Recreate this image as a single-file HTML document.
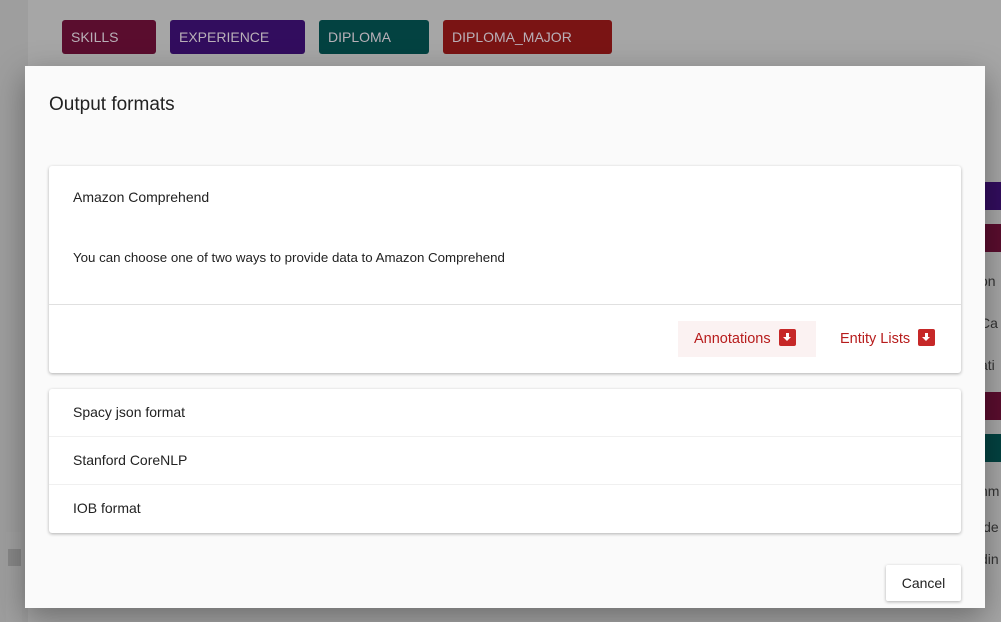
<!DOCTYPE html>
<html><head><style>
body{margin:0;width:1001px;height:622px;overflow:hidden;background:#a6a6a6;font-family:"Liberation Sans",sans-serif;position:relative}
.tag{position:absolute;top:20px;height:34px;border-radius:3px;color:#b9b0b8;font-size:14px;line-height:34px;padding-left:9px;box-sizing:border-box}
.side{position:absolute;left:975px;width:26px;height:28px}
.modal{position:absolute;left:25px;top:66px;width:960px;height:542px;background:#fafafa;box-shadow:0 10px 30px rgba(0,0,0,.35)}
h2{position:absolute;left:24px;top:28px;margin:0;font-size:19px;font-weight:normal;color:#222}
.card{position:absolute;left:24px;width:912px;background:#fff;border-radius:3px;box-shadow:0 1px 3px rgba(0,0,0,.3)}
.t{position:absolute;left:24px;font-size:14px;color:#222}
.btn{position:absolute;top:155px;height:36px;line-height:36px;color:#b71c1c;font-size:14.5px;padding:0 16px;box-sizing:border-box}
.ic{display:inline-block;width:17px;height:17px;background:#c62828;border-radius:2px;vertical-align:-3px;margin-left:8px;position:relative}
.ic:after{content:"";position:absolute;left:4px;top:8px;border:4.5px solid transparent;border-top:4px solid #fff}
.ic:before{content:"";position:absolute;left:7px;top:4px;width:3px;height:4px;background:#fff}
.row{position:absolute;left:0;width:912px;height:47px;border-bottom:1px solid #f0f0f0}
.sx{position:absolute;left:980px;font-size:14px;color:#333}
</style></head><body>
<div style="position:absolute;left:0;top:0;width:28px;height:622px;background:#9e9e9e"></div>
<div style="position:absolute;left:6px;top:532px;width:16px;height:90px;background:#a0a0a0"></div>
<div style="position:absolute;left:8px;top:549px;width:13px;height:17px;background:#888"></div>
<div class="tag" style="left:62px;width:94px;background:#5a0d2e">SKILLS</div>
<div class="tag" style="left:170px;width:135px;background:#320d5e">EXPERIENCE</div>
<div class="tag" style="left:319px;width:110px;background:#034241">DIPLOMA</div>
<div class="tag" style="left:443px;width:169px;background:#7a1414">DIPLOMA_MAJOR</div>
<div class="side" style="top:182px;background:#320d5e"></div>
<div class="side" style="top:224px;background:#5a0d2e"></div>
<div class="side" style="top:392px;background:#5a0d2e"></div>
<div class="side" style="top:434px;background:#034241"></div>
<div class="sx" style="top:273px">on</div>
<div class="sx" style="top:315px">Ca</div>
<div class="sx" style="top:357px">ati</div>
<div class="sx" style="top:483px">nm</div>
<div class="sx" style="top:519px">ide</div>
<div class="sx" style="top:551px">din</div>
<div class="modal">
<h2>Output formats</h2>
<div class="card" style="top:100px;height:207px">
<div class="t" style="top:23px">Amazon Comprehend</div>
<div class="t" style="top:84px;font-size:13.3px">You can choose one of two ways to provide data to Amazon Comprehend</div>
<div style="position:absolute;top:138px;left:0;width:912px;height:1px;background:#e0e0e0"></div>
<div class="btn" style="left:629px;width:138px;background:#fbf2f2">Annotations<span class="ic"></span></div>
<div class="btn" style="left:775px">Entity Lists<span class="ic"></span></div>
</div>
<div class="card" style="top:323px;height:144px">
<div class="row" style="top:0"><div class="t" style="top:15px">Spacy json format</div></div>
<div class="row" style="top:48px"><div class="t" style="top:15px">Stanford CoreNLP</div></div>
<div class="row" style="top:96px;border:0"><div class="t" style="top:15px">IOB format</div></div>
</div>
<div style="position:absolute;left:861px;top:499px;width:75px;height:36px;background:#fff;box-shadow:0 1px 3px rgba(0,0,0,.3);border-radius:2px;text-align:center;line-height:36px;font-size:14px;color:#222">Cancel</div>
</div>
</body></html>
